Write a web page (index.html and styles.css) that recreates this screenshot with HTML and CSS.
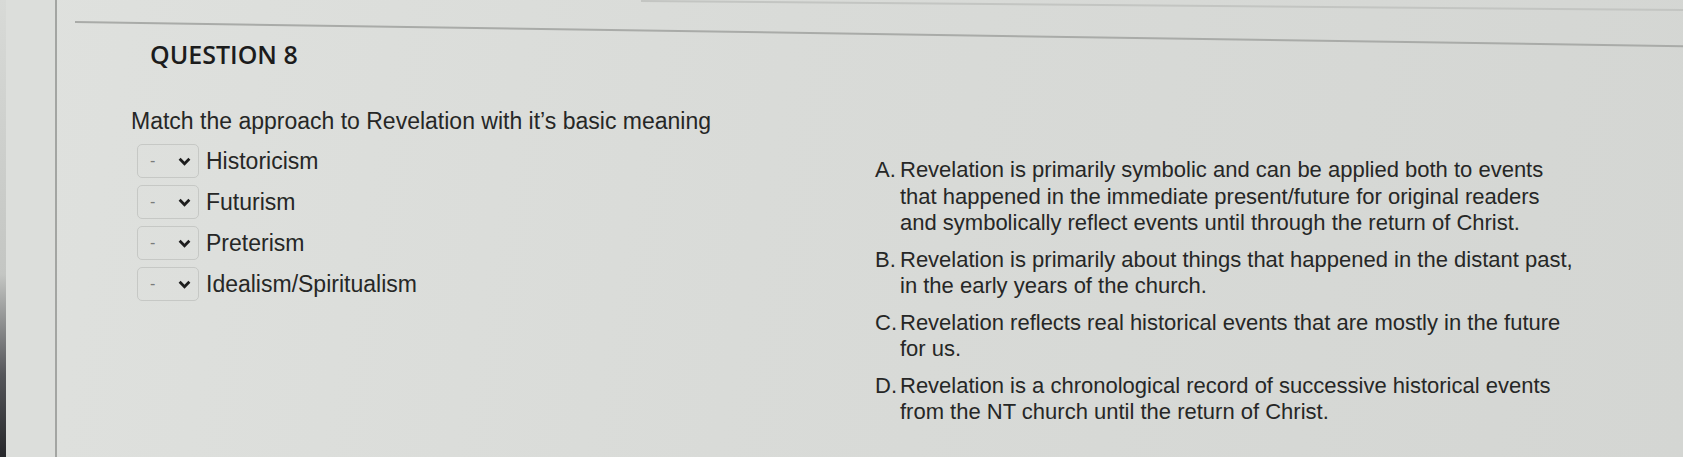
FILE: index.html
```html
<!DOCTYPE html>
<html lang="en">
<head>
    <meta charset="UTF-8">
    <meta name="viewport" content="width=device-width, initial-scale=1.0">
    <title>Question 8</title>
    <link rel="stylesheet" href="styles.css">
</head>
<body>
    <div class="screen">
        <div class="rail"><span class="edge"></span></div>

        <main class="panel">
            <div class="rule rule-faint"></div>
            <div class="rule"></div>

            <h2 class="q-title">QUESTION 8</h2>
            <p class="prompt">Match the approach to Revelation with it&#8217;s basic meaning</p>

            <div class="match">
                <!-- left side: one dropdown per approach -->
                <ul class="terms">
                    <li class="term">
                        <span class="pick">-<svg class="chev" viewBox="0 0 12 8"><path d="M1.5 1.5 L6 6 L10.5 1.5"/></svg></span>
                        Historicism
                    </li>
                    <li class="term">
                        <span class="pick">-<svg class="chev" viewBox="0 0 12 8"><path d="M1.5 1.5 L6 6 L10.5 1.5"/></svg></span>
                        Futurism
                    </li>
                    <li class="term">
                        <span class="pick">-<svg class="chev" viewBox="0 0 12 8"><path d="M1.5 1.5 L6 6 L10.5 1.5"/></svg></span>
                        Preterism
                    </li>
                    <li class="term">
                        <span class="pick">-<svg class="chev" viewBox="0 0 12 8"><path d="M1.5 1.5 L6 6 L10.5 1.5"/></svg></span>
                        Idealism/Spiritualism
                    </li>
                </ul>

                <!-- right side: the meanings -->
                <ol class="answers">
                    <li><span class="key">A.</span><span>Revelation is primarily symbolic and can be applied both to events that happened in the immediate present/future for original readers and symbolically reflect events until through the return of Christ.</span></li>
                    <li><span class="key">B.</span><span>Revelation is primarily about things that happened in the distant past, in the early years of the church.</span></li>
                    <li><span class="key">C.</span><span>Revelation reflects real historical events that are mostly in the future for us.</span></li>
                    <li><span class="key">D.</span><span>Revelation is a chronological record of successive historical events from the NT church until the return of Christ.</span></li>
                </ol>
            </div>
        </main>
    </div>
</body>
</html>
```

FILE: styles.css
```css
* {
    margin: 0;
    padding: 0;
    box-sizing: border-box;
}

body {
    font-family: "Liberation Sans", Arial, sans-serif;
    background-color: #d8dad7;
    color: #262726;
    overflow: hidden;
}

.screen {
    display: flex;
    height: 457px;
    background: linear-gradient(100deg, #dfe1de 0%, #d9dbd8 45%, #d4d6d3 100%);
}

/* thin strip at the very left, with the window edge */
.rail {
    width: 57px;
    flex-shrink: 0;
    display: flex;
    border-right: 2px solid #a3a5a2;
    background-color: #dcdedb;
}

.edge {
    width: 6px;
    background: linear-gradient(180deg, #d8dad7 0%, #c4c6c3 60%, #55565a 82%, #26272a 100%);
}

.panel {
    flex: 1;
    min-width: 0;
    overflow: hidden;
    padding-left: 74px;
}

.rule {
    height: 2px;
    margin-left: -56px;
    width: 1640px;
    background-color: #a9aba8;
    transform-origin: left center;
    transform: rotate(0.86deg);
}

.rule-faint {
    margin-left: 510px;
    margin-bottom: 19px;
    width: 1080px;
    background-color: #c3c5c2;
    transform: rotate(0.5deg);
}

.q-title {
    font-family: "Open Sans", sans-serif;
    font-weight: 600;
    font-size: 25px;
    line-height: 30px;
    color: #1c1c1c;
    margin-top: 16px;
    margin-left: 19px;
}

.prompt {
    font-size: 23px;
    line-height: 28px;
    margin-top: 38px;
}

.match {
    display: flex;
    align-items: flex-start;
    margin-top: 9px;
}

.terms {
    list-style: none;
    width: 744px;
    flex-shrink: 0;
    padding-left: 6px;
    display: flex;
    flex-direction: column;
    gap: 7px;
}

.term {
    display: flex;
    align-items: center;
    gap: 7px;
    font-size: 23px;
    line-height: 28px;
}

.pick {
    display: flex;
    align-items: center;
    width: 62px;
    height: 34px;
    padding-left: 12px;
    border: 1px solid #c6c8c5;
    border-radius: 5px;
    font-size: 16px;
    color: #7a7b7a;
}

.chev {
    width: 13px;
    height: 9px;
    margin-left: 23px;
    fill: none;
    stroke: #1d1d1d;
    stroke-width: 2.6;
}

.answers {
    list-style: none;
    width: 710px;
    padding-top: 13px;
    display: flex;
    flex-direction: column;
    gap: 10px;
}

.answers li {
    display: flex;
    font-size: 22px;
    line-height: 26.5px;
}

.key {
    width: 25px;
    flex-shrink: 0;
}

.answers li span:last-child {
    width: 679px;
}
```
